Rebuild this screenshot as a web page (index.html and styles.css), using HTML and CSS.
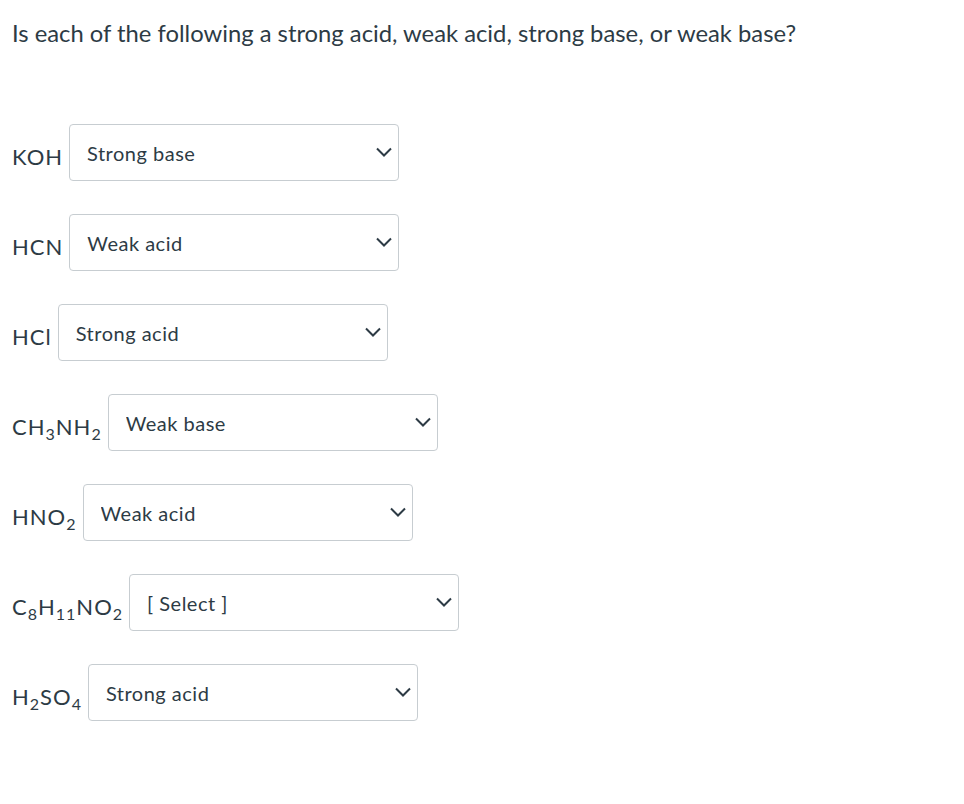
FILE: index.html
```html
<!doctype html>
<html>
<head>
    <title>Acids and bases</title>
    <meta charset="utf-8">
    <link rel="stylesheet" href="styles.css">
</head>
<body>
<div class="question">
    <p class="prompt">Is each of the following a strong acid, weak acid, strong base, or weak base?</p>

    <div class="answers">
        <div class="row">
            <span class="formula">KOH</span>
            <div class="pick">
                <select><option>Strong base</option></select>
                <svg class="chevron" width="16" height="10" viewBox="0 0 16 10"><path d="M1 1.5 L8 8.5 L15 1.5" /></svg>
            </div>
        </div>
        <div class="row">
            <span class="formula">HCN</span>
            <div class="pick">
                <select><option>Weak acid</option></select>
                <svg class="chevron" width="16" height="10" viewBox="0 0 16 10"><path d="M1 1.5 L8 8.5 L15 1.5" /></svg>
            </div>
        </div>
        <div class="row">
            <span class="formula">HCl</span>
            <div class="pick">
                <select><option>Strong acid</option></select>
                <svg class="chevron" width="16" height="10" viewBox="0 0 16 10"><path d="M1 1.5 L8 8.5 L15 1.5" /></svg>
            </div>
        </div>
        <div class="row">
            <span class="formula">CH<sub>3</sub>NH<sub>2</sub></span>
            <div class="pick">
                <select><option>Weak base</option></select>
                <svg class="chevron" width="16" height="10" viewBox="0 0 16 10"><path d="M1 1.5 L8 8.5 L15 1.5" /></svg>
            </div>
        </div>
        <div class="row">
            <span class="formula">HNO<sub>2</sub></span>
            <div class="pick">
                <select><option>Weak acid</option></select>
                <svg class="chevron" width="16" height="10" viewBox="0 0 16 10"><path d="M1 1.5 L8 8.5 L15 1.5" /></svg>
            </div>
        </div>
        <div class="row">
            <span class="formula">C<sub>8</sub>H<sub>11</sub>NO<sub>2</sub></span>
            <div class="pick">
                <select><option>[ Select ]</option></select>
                <svg class="chevron" width="16" height="10" viewBox="0 0 16 10"><path d="M1 1.5 L8 8.5 L15 1.5" /></svg>
            </div>
        </div>
        <div class="row">
            <span class="formula">H<sub>2</sub>SO<sub>4</sub></span>
            <div class="pick">
                <select><option>Strong acid</option></select>
                <svg class="chevron" width="16" height="10" viewBox="0 0 16 10"><path d="M1 1.5 L8 8.5 L15 1.5" /></svg>
            </div>
        </div>
    </div>
</div>
</body>
</html>
```

FILE: styles.css
```css
* { box-sizing: border-box; }

body {
    margin: 0;
    background: #ffffff;
    color: #2d3b45;
    font-family: Lato, "Open Sans", sans-serif;
}

.question {
    padding: 20px 12px;
}

.prompt {
    margin: 0;
    font-size: 23.8px;
    line-height: 27px;
}

.answers {
    display: flex;
    flex-direction: column;
    gap: 33px;
    margin-top: 77px;
}

.row {
    display: flex;
    align-items: center;
}

.formula {
    font-size: 22px;
    line-height: 26px;
    letter-spacing: 1px;
    padding-top: 9px;
    margin-right: 6px;
    white-space: nowrap;
}

.formula sub {
    font-size: 16px;
    line-height: 0;
    vertical-align: -5px;
}

.pick {
    position: relative;
    width: 330px;
    height: 57px;
}

.pick select {
    -webkit-appearance: none;
    appearance: none;
    width: 100%;
    height: 100%;
    margin: 0;
    padding: 0 40px 0 17px;
    border: 1px solid #c7cdd1;
    border-radius: 4px;
    background: #ffffff;
    color: #2d3b45;
    font-family: Lato, "Open Sans", sans-serif;
    font-size: 20px;
    letter-spacing: 0.5px;
}

.chevron {
    position: absolute;
    right: 7px;
    top: 23px;
    fill: none;
    stroke: #2d3b45;
    stroke-width: 2;
    pointer-events: none;
}
```
